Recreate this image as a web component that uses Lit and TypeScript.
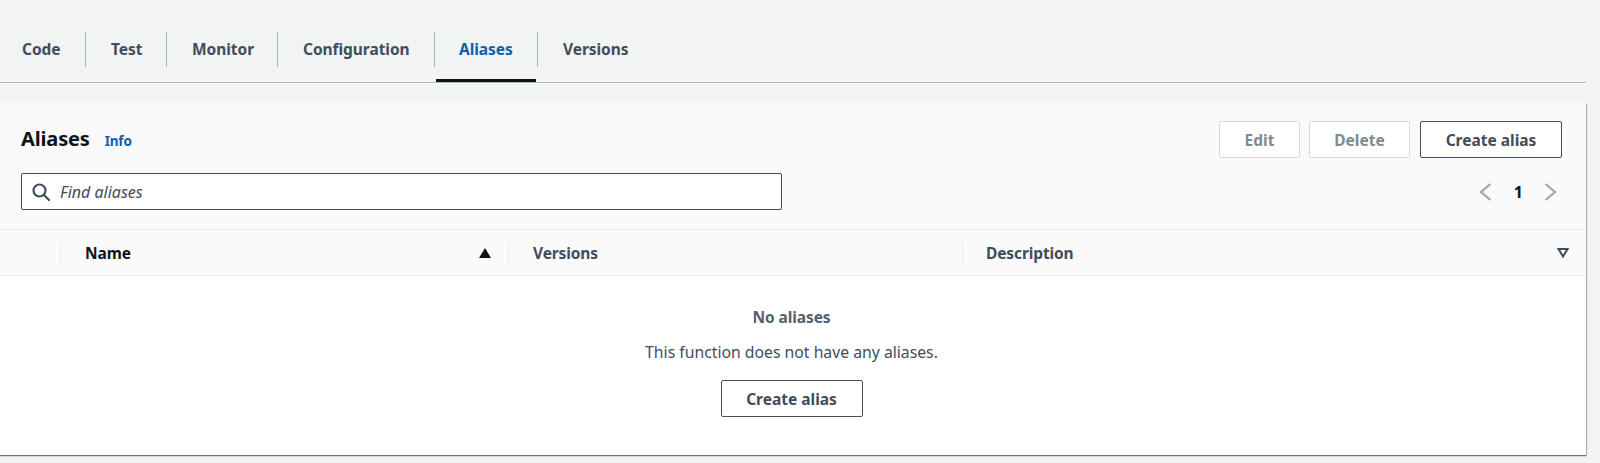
import { LitElement, html, css } from "lit";
import { customElement } from "lit/decorators.js";

@customElement("app-root")
export class AppRoot extends LitElement {
  static styles = css`
    :host {
      display: block;
      height: 463px;
      overflow: hidden;
      background: #f2f3f3;
      font-family: "Noto Sans", "Open Sans", sans-serif;
      font-size: 15.75px;
      color: #414d5c;
    }
    .tabs {
      display: grid;
      grid-template-columns: 86px 81px 111px 157px 103px 1fr;
      height: 82px;
      border-bottom: 1px solid #a9b3b4;
      box-shadow: 0 1px 0 #fbfcfc;
      margin-right: 14px;
      align-items: end;
    }
    .tab {
      display: flex;
      align-items: center;
      height: 50px;
      padding: 0 0 16px 25px;
      box-sizing: border-box;
      font-weight: 700;
      font-size: 15.5px;
      letter-spacing: -0.05px;
      position: relative;
      white-space: nowrap;
    }
    .tab:first-child { padding-left: 22px; }
    .tab.sep::after {
      content: "";
      position: absolute;
      right: 0;
      top: 0;
      bottom: 15px;
      width: 1px;
      background: #aab7b8;
    }
    .tab.active { color: #0a5fb0; padding-left: 24px; }
    .tab.active::before {
      content: "";
      position: absolute;
      left: 1px;
      right: 2px;
      bottom: 0;
      height: 3px;
      background: #0f141a;
    }
    .card {
      margin: 20px 14px 0 0;
      height: 352px;
      background: #fff;
      box-shadow: 0 1px 1px rgba(0, 28, 36, 0.45), 1px 1px 1px rgba(0, 28, 36, 0.25);
      display: flex;
      flex-direction: column;
    }
    .head { background: #fafafa; padding: 18px 24px 19px 21px; }
    .row { display: flex; justify-content: space-between; align-items: center; }
    .row + .row { margin-top: 15px; }
    .title { display: flex; align-items: baseline; gap: 15px; margin-top: -2px; }
    h2 { margin: 0; font-size: 20px; font-weight: 700; color: #0f141a; letter-spacing: -0.15px; }
    .info { color: #0a5fb0; font-size: 13.5px; font-weight: 700; letter-spacing: -0.2px; }
    .btns { display: flex; gap: 9px; }
    .btn {
      height: 37px;
      box-sizing: border-box;
      display: flex;
      align-items: center;
      justify-content: center;
      background: #fff;
      border: 1px solid #414d5c;
      border-radius: 2px;
      font-weight: 700;
      font-size: 15.5px;
      letter-spacing: 0;
      color: #414d5c;
    }
    .btn.off { border-color: #d5dbdb; color: #7d8c8c; }
    .edit { width: 81px; }
    .del { width: 101px; margin-right: 1px; }
    .create { width: 142px; }
    .search {
      width: 761px;
      height: 37px;
      box-sizing: border-box;
      background: #fff;
      border: 1px solid #414d5c;
      border-radius: 2px;
      display: flex;
      align-items: center;
      gap: 10px;
      padding-left: 10px;
      font-style: italic;
      font-size: 16px;
      color: #414d5c;
    }
    .search svg { flex: none; }
    .pager { display: flex; align-items: center; gap: 21px; padding-right: 5px; }
    .pager b { color: #0f141a; font-size: 16px; font-weight: 700; }
    .pager svg:first-child { margin-right: 1px; }
    .thead {
      display: grid;
      grid-template-columns: 60px 448px 454px 1fr;
      height: 47px;
      box-sizing: border-box;
      background: #fafafa;
      border-top: 1px solid #e9ebed;
      border-bottom: 1px solid #e9ebed;
      align-items: center;
      font-weight: 700;
      font-size: 15.5px;
      letter-spacing: -0.12px;
    }
    .th {
      height: 23px;
      display: flex;
      align-items: center;
      justify-content: space-between;
      padding-left: 24px;
      padding-right: 17px;
      border-left: 1px solid #e9ebed;
      box-sizing: border-box;
    }
    .th:first-child { border-left: none; }
    .th:last-child { padding-left: 23px; }
    .th.name { color: #0f141a; }
    .th svg { flex: none; }
    .empty {
      flex: 1;
      display: flex;
      flex-direction: column;
      align-items: center;
      padding: 30px 3px 0 0;
      text-align: center;
    }
    .empty b { font-weight: 700; font-size: 15.5px; letter-spacing: -0.1px; line-height: 22px; color: #545f6c; }
    .empty p { margin: 13px 0 0; line-height: 22px; }
    .empty .btn { margin-top: 17px; width: 142px; }
  `;

  render() {
    const tabs = ["Code", "Test", "Monitor", "Configuration", "Aliases", "Versions"];
    return html`
      <div class="tabs">
        ${tabs.map(
          (t, i) => html`<div class="tab ${t === "Aliases" ? "active" : ""} ${i < 5 ? "sep" : ""}">${t}</div>`
        )}
      </div>
      <div class="card">
        <div class="head">
          <div class="row">
            <div class="title"><h2>Aliases</h2><span class="info">Info</span></div>
            <div class="btns">
              <div class="btn off edit">Edit</div>
              <div class="btn off del">Delete</div>
              <div class="btn create">Create alias</div>
            </div>
          </div>
          <div class="row">
            <div class="search">
              <svg width="18" height="18" viewBox="0 0 18 18" fill="none" stroke="#414d5c" stroke-width="2.2" stroke-linecap="round">
                <circle cx="7.5" cy="7.5" r="6"></circle>
                <path d="M12 12l5 5"></path>
              </svg>
              Find aliases
            </div>
            <div class="pager">
              <svg width="13" height="20" viewBox="0 0 13 20" fill="none" stroke="#9ba7a8" stroke-width="2.2"><path d="M11.5 2L2 10l9.5 8"></path></svg>
              <b>1</b>
              <svg width="13" height="20" viewBox="0 0 13 20" fill="none" stroke="#9ba7a8" stroke-width="2.2"><path d="M1.5 2L11 10l-9.5 8"></path></svg>
            </div>
          </div>
        </div>
        <div class="thead">
          <div class="th"></div>
          <div class="th name">
            Name
            <svg width="12" height="10" viewBox="0 0 12 10"><path d="M6 0l6 10H0z" fill="#0f141a"></path></svg>
          </div>
          <div class="th">Versions</div>
          <div class="th">
            Description
            <svg width="12" height="10" viewBox="0 0 12 10" fill="none" stroke="#414d5c" stroke-width="2"><path d="M1.5 1h9L6 8.5z"></path></svg>
          </div>
        </div>
        <div class="empty">
          <b>No aliases</b>
          <p>This function does not have any aliases.</p>
          <div class="btn">Create alias</div>
        </div>
      </div>
    `;
  }
}
